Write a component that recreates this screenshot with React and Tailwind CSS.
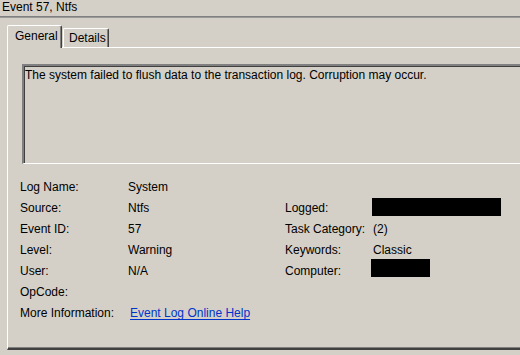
export default function App() {
  const left = [
    ["Log Name:", "System"],
    ["Source:", "Ntfs"],
    ["Event ID:", "57"],
    ["Level:", "Warning"],
    ["User:", "N/A"],
    ["OpCode:", ""],
  ];
  return (
    <div className="w-[520px] h-[355px] overflow-hidden bg-[#d4d0c8] text-black text-[12px] leading-[15px] font-['Liberation_Sans',Arial,sans-serif]">
      <div className="h-[16px] pl-[2px] pt-[0px]">Event 57, Ntfs</div>
      <div className="h-[2px] border-t border-[#808080] bg-[#9a9a9a]" />
      <div className="pt-[7px] pl-[7px]">
        <div className="flex items-end h-[22px]">
          <div className="relative z-10 -mb-px h-[23px] w-[55px] bg-[#d4d0c8] border-l border-t border-white border-r border-r-[#404040] rounded-t-[2px] shadow-[inset_-1px_0_0_#808080] pl-[7px] pt-[3px]">
            General
          </div>
          <div className="h-[19px] w-[46px] ml-px bg-[#d4d0c8] border-l border-t border-white border-r border-r-[#404040] rounded-t-[2px] shadow-[inset_-1px_0_0_#808080] pl-[5px] pt-[2px]">
            Details
          </div>
        </div>
        <div className="h-[303px] border-l border-t border-white border-b-2 border-b-[#404040] shadow-[inset_0_-1px_0_#808080]">
          <div className="pl-[14px] pt-[16px]">
            <div className="w-[520px] h-[100px] border-l-2 border-t-2 border-l-[#808080] border-t-[#808080] border-b border-b-white shadow-[inset_1px_1px_0_#404040] pl-[1px] pt-[2px]">
              The system failed to flush data to the transaction log. Corruption may occur.
            </div>
          </div>
          <div className="flex pl-[12px] pt-[13px]">
            <div className="w-[265px] flex flex-col">
              {left.map(([k, v]) => (
                <div key={k} className="flex h-[21px] items-center">
                  <div className="w-[108px]">{k}</div>
                  <div>{v}</div>
                </div>
              ))}
              <div className="flex h-[21px] items-center">
                <div className="w-[110px]">More Information:</div>
                <div className="text-[#0033cc] underline underline-offset-2">Event Log Online Help</div>
              </div>
            </div>
            <div className="flex flex-col">
              <div className="h-[21px]" />
              <div className="flex h-[21px] items-center">
                <div className="w-[87px]">Logged:</div>
                <div className="w-[129px] h-[18px] bg-black -mt-[3px]" />
              </div>
              <div className="flex h-[21px] items-center">
                <div className="w-[88px]">Task Category:</div>
                <div>(2)</div>
              </div>
              <div className="flex h-[21px] items-center">
                <div className="w-[88px]">Keywords:</div>
                <div>Classic</div>
              </div>
              <div className="flex h-[21px] items-center">
                <div className="w-[86px]">Computer:</div>
                <div className="w-[59px] h-[18px] bg-black -mt-[7px]" />
              </div>
            </div>
          </div>
        </div>
      </div>
    </div>
  );
}
